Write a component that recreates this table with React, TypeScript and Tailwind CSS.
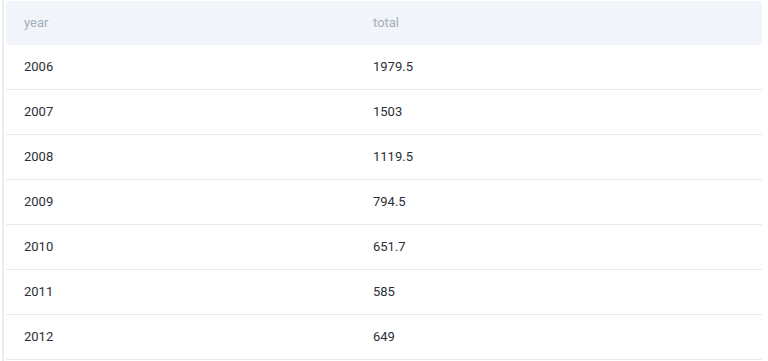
import React from "react";

const rows: [string, string][] = [
  ["2006", "1979.5"],
  ["2007", "1503"],
  ["2008", "1119.5"],
  ["2009", "794.5"],
  ["2010", "651.7"],
  ["2011", "585"],
  ["2012", "649"],
];

export default function App() {
  return (
    <div
      className="w-[768px] h-[361px] overflow-hidden bg-white flex"
      style={{ fontFamily: "Roboto, 'Liberation Sans', sans-serif" }}
    >
      <div className="w-[2px] shrink-0" />
      <div className="w-[2px] shrink-0 bg-[#ececec]" />
      <div className="w-[2px] shrink-0" />
      <div className="w-[756px] pt-[1px]">
        <div className="grid grid-cols-[349px_1fr] h-[44px] items-center bg-[#f1f4f8] rounded-[4px] text-[13px] text-[#a5aebb]">
          <div className="pl-[18px]">year</div>
          <div className="pl-[18px]">total</div>
        </div>
        {rows.map(([y, t]) => (
          <div
            key={y}
            className="grid grid-cols-[349px_1fr] h-[45px] items-center border-b border-[#e6ebf1] text-[13px] text-[#2b2f36]"
          >
            <div className="pl-[18px]">{y}</div>
            <div className="pl-[18px]">{t}</div>
          </div>
        ))}
      </div>
    </div>
  );
}
